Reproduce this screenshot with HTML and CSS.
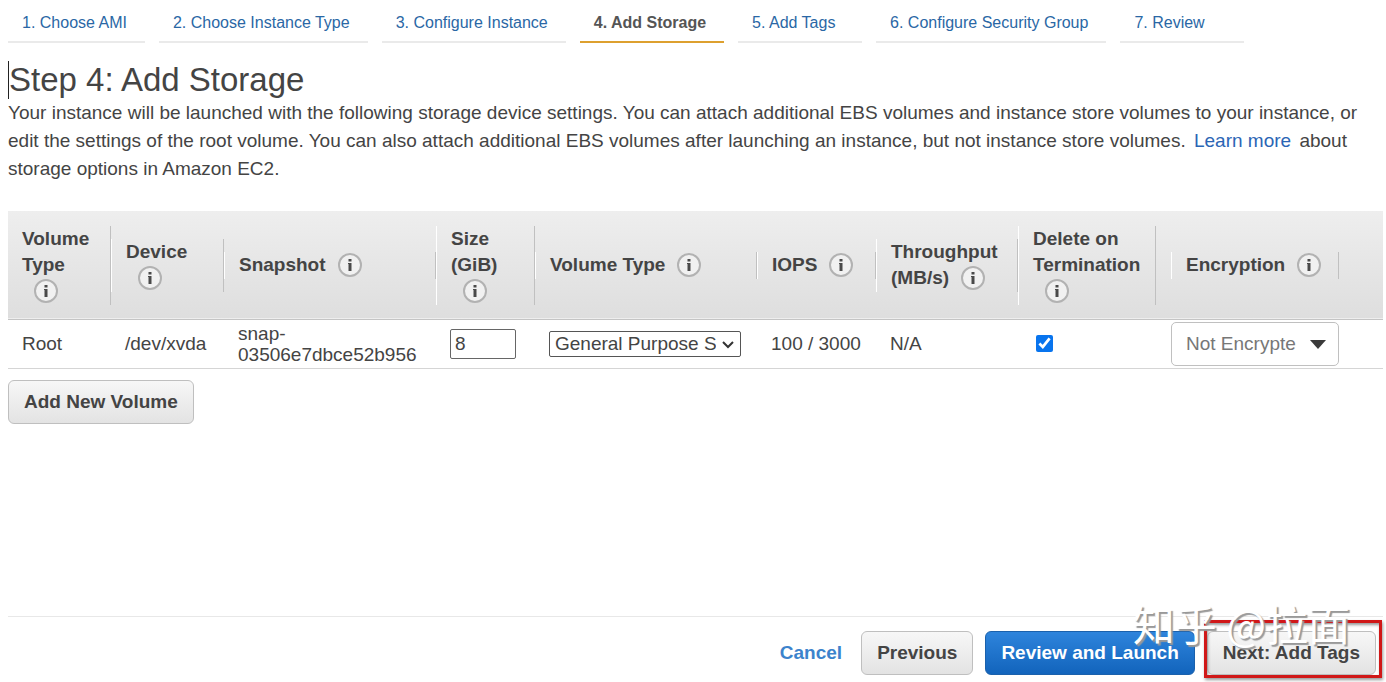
FILE: index.html
```html
<!DOCTYPE html>
<html lang="en">
<head>
<meta charset="utf-8">
<title>Step 4: Add Storage</title>
<link rel="stylesheet" href="styles.css">
</head>
<body>
<svg class="defs" aria-hidden="true">
  <symbol id="info" viewBox="0 0 24 24">
    <circle cx="12" cy="12" r="11" fill="#f1f1f1" stroke="#b2b2b2" stroke-width="2"/>
    <path d="M10.500 6h3v2.500h-3zM10 10h3.500v8h-3v-7h-.5z" fill="#4a4a4a"/>
  </symbol>
</svg>
<nav class="steps" aria-label="Wizard steps">
  <a class="step" href="#">1. Choose AMI</a>
  <a class="step" href="#">2. Choose Instance Type</a>
  <a class="step" href="#">3. Configure Instance</a>
  <a class="step step-current" href="#" aria-current="step">4. Add Storage</a>
  <a class="step" href="#">5. Add Tags</a>
  <a class="step" href="#">6. Configure Security Group</a>
  <a class="step" href="#">7. Review</a>
</nav>
<main class="content">
  <h1 class="title">Step 4: Add Storage</h1>
  <p class="intro">Your instance will be launched with the following storage device settings. You can attach additional EBS volumes and instance store volumes to your instance, or edit the settings of the root volume. You can also attach additional EBS volumes after launching an instance, but not instance store volumes. <a class="learn" href="#">Learn more</a> about storage options in Amazon EC2.</p>
  <table class="volumes">
    <colgroup>
      <col class="col-kind"><col class="col-device"><col class="col-snapshot"><col class="col-size"><col class="col-type"><col class="col-iops"><col class="col-throughput"><col class="col-delete"><col class="col-encryption">
    </colgroup>
    <thead>
      <tr>
        <th><div class="head">Volume Type<svg class="info"><use href="#info"/></svg></div></th>
        <th><div class="head">Device<svg class="info"><use href="#info"/></svg></div></th>
        <th><div class="head">Snapshot<svg class="info"><use href="#info"/></svg></div></th>
        <th><div class="head">Size (GiB)<svg class="info"><use href="#info"/></svg></div></th>
        <th><div class="head">Volume Type<svg class="info"><use href="#info"/></svg></div></th>
        <th><div class="head">IOPS<svg class="info"><use href="#info"/></svg></div></th>
        <th><div class="head">Throughput (MB/s)<svg class="info"><use href="#info"/></svg></div></th>
        <th><div class="head head-delete">Delete on Termination<svg class="info"><use href="#info"/></svg></div></th>
        <th><div class="head head-encryption">Encryption<svg class="info"><use href="#info"/></svg></div></th>
      </tr>
    </thead>
    <tbody>
      <tr>
        <td>Root</td>
        <td>/dev/xvda</td>
        <td>snap-03506e7dbce52b956</td>
        <td><input class="size" type="text" value="8" aria-label="Size (GiB)"></td>
        <td><span class="pick"><select class="type" aria-label="Volume Type"><option>General Purpose SSD (gp2)</option></select><svg class="chevron" viewBox="0 0 14 10"><path d="M2 2l5 5 5-5" fill="none" stroke="#333" stroke-width="2"/></svg></span></td>
        <td>100 / 3000</td>
        <td>N/A</td>
        <td><input class="tick" type="checkbox" checked aria-label="Delete on Termination"></td>
        <td class="cell-encryption"><span class="pick"><select class="encryption" aria-label="Encryption"><option>Not Encrypted</option></select><svg class="arrow" viewBox="0 0 16 9"><path d="M0 0h16L8 9z" fill="#3a3a3a"/></svg></span></td>
      </tr>
    </tbody>
  </table>
  <button class="button" type="button">Add New Volume</button>
</main>
<footer class="actions">
  <a class="cancel" href="#">Cancel</a>
  <button class="button" type="button">Previous</button>
  <button class="button button-primary" type="button">Review and Launch</button>
  <div class="next">
    <button class="button" type="button">Next: Add Tags</button>
    <span class="mark"></span>
  </div>
  <span class="watermark" lang="zh">知乎 @拉面</span>
</footer>
</body>
</html>
```
FILE: styles.css
```css
* { box-sizing: border-box; }
body {
  margin: 0;
  min-height: 100vh;
  padding: 0 3px 0 8px;
  display: flex;
  flex-direction: column;
  background: #fff;
  color: #444;
  font: 19px/28px "Liberation Sans", Arial, sans-serif;
}
a { color: #2a67a5; text-decoration: none; }
.defs { position: absolute; width: 0; height: 0; }

.steps { display: flex; gap: 14px; }
.step {
  padding: 9px 18px 4px 14px;
  border-bottom: 2px solid #eaeaea;
  font-size: 16px;
  white-space: nowrap;
}
.step:nth-child(5), .step:last-child { min-width: 124px; }
.step-current { color: #555; font-weight: bold; border-color: #dda02f; }

.content { flex: 1; }
.title {
  width: fit-content;
  margin: 18px 0 0;
  border-left: 1px solid #222;
  font-size: 33px;
  line-height: 38px;
  font-weight: normal;
}
.intro { margin: 0 0 28px; }
.learn { margin: 0 3px; color: #2b65b5; }

.volumes {
  width: 100%;
  margin-bottom: 11px;
  border-collapse: collapse;
  table-layout: fixed;
}
.col-kind { width: 103px; }
.col-device { width: 113px; }
.col-snapshot { width: 212px; }
.col-size { width: 99px; }
.col-type { width: 222px; }
.col-iops { width: 119px; }
.col-throughput { width: 142px; }
.col-delete { width: 153px; }
.volumes thead {
  height: 108px;
  background: linear-gradient(#eee, #dedede);
  border-bottom: 1px solid #c4c4c4;
}
.volumes th { padding: 2px 0 0; text-align: left; line-height: 26px; }
.head { padding: 0 14px; border-left: 1px solid #fff; border-right: 1px solid #c0c0c0; }
th:first-child .head { border-left: 0; }
.head-delete { margin-right: 15px; }
.head-encryption { width: 168px; }
.info { width: 24px; height: 24px; margin: 0 0 2px 12px; vertical-align: middle; }
.volumes tbody tr { height: 49px; border-bottom: 1px solid #d5d5d5; }
.volumes td { padding: 0 0 0 14px; line-height: 21px; overflow-wrap: break-word; }
.volumes .cell-encryption { padding: 0; }

.size {
  display: block;
  width: 66px;
  height: 30px;
  padding: 0 4px;
  border: 1px solid #666;
  border-radius: 2px;
  color: #444;
  font: inherit;
}
.pick { position: relative; display: block; width: fit-content; }
.pick select { display: block; appearance: none; background: #fff; font: inherit; }
.type {
  width: 192px;
  height: 26px;
  padding: 0 24px 0 5px;
  border: 1px solid #555;
  border-radius: 2px;
  color: #444;
}
.chevron { position: absolute; top: 9px; right: 6px; width: 14px; height: 10px; }
.encryption {
  width: 168px;
  height: 44px;
  padding: 0 42px 0 14px;
  border: 1px solid #c0c0c0;
  border-radius: 5px;
  color: #777;
}
.arrow { position: absolute; top: 18px; right: 13px; width: 16px; height: 9px; }
.tick { display: block; width: 17px; height: 17px; margin: 0 0 0 4px; accent-color: #0874ee; }

.button {
  height: 44px;
  padding: 0 15px;
  border: 1px solid #bfbfbf;
  border-radius: 6px;
  background: linear-gradient(#f7f7f7, #e3e3e3);
  color: #444;
  font: bold 19px/28px "Liberation Sans", Arial, sans-serif;
  white-space: nowrap;
}
.button-primary { background: linear-gradient(#2e84dc, #1264bc); border-color: #1b61ac; color: #fff; }

.actions {
  position: relative;
  display: flex;
  justify-content: flex-end;
  align-items: center;
  gap: 12px;
  padding: 14px 7px 7px 0;
  border-top: 1px solid #e8e8e8;
}
.cancel { margin-right: 7px; color: #3c83cc; font-weight: bold; }
.next { position: relative; }
.next .button { display: block; }
.mark {
  position: absolute;
  inset: -11px -6px -3px -3px;
  border: 3px solid #d01818;
  box-shadow: 1px 2px 3px #999, inset 1px 2px 3px #999;
  pointer-events: none;
}
.watermark {
  position: absolute;
  top: -16px;
  right: 33px;
  color: #fff;
  font: 42px/44px "Noto Sans CJK SC", sans-serif;
  text-shadow: 2px 2px 1px #999;
  white-space: nowrap;
  pointer-events: none;
}
```
